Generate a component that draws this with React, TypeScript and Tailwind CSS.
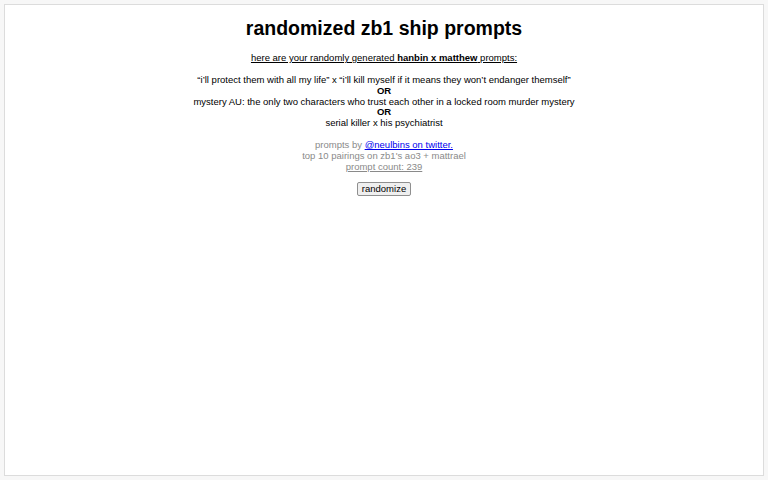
import React from "react";

const prompts = [
  "\u201ci\u2019ll protect them with all my life\u201d x \u201ci\u2019ll kill myself if it means they won\u2019t endanger themself\u201d",
  "mystery AU: the only two characters who trust each other in a locked room murder mystery",
  "serial killer x his psychiatrist",
];

export default function App() {
  return (
    <div
      className="min-h-[480px] bg-[#f7f7f7] p-[4px]"
      style={{ fontFamily: '"Liberation Sans", Arial, sans-serif' }}
    >
      <div className="h-[472px] border border-[#dcdcdc] bg-white text-center text-black">
        <h1 className="pt-[9px] text-[19.5px] font-bold leading-[28px]">randomized zb1 ship prompts</h1>
        <p className="mt-[10px] text-[9.5px] leading-[12px] underline">
          here are your randomly generated <b>hanbin x matthew</b> prompts:
        </p>
        <div className="mt-[11px] text-[9.5px] leading-[10.8px]">
          {prompts.map((p, i) => (
            <React.Fragment key={i}>
              {i > 0 && <div className="font-bold">OR</div>}
              <div>{p}</div>
            </React.Fragment>
          ))}
        </div>
        <div className="mt-[10px] text-[9.5px] leading-[11px] text-[#8a8a8a]">
          <div>
            prompts by <a className="text-[#0000ee] underline" href="#">@neulbins on twitter.</a>
          </div>
          <div>top 10 pairings on zb1&apos;s ao3 + mattrael</div>
          <div className="underline">prompt count: 239</div>
        </div>
        <button className="mt-[10px] rounded-[2px] border border-[#8f8f8f] bg-[#efefef] px-[4px] text-[9.5px] leading-[12px] text-black">
          randomize
        </button>
      </div>
    </div>
  );
}
